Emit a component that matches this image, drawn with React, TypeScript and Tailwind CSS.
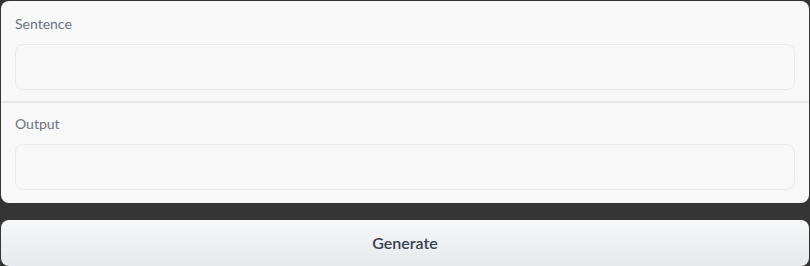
export default function App() {
  return (
    <div
      className="w-[810px] h-[266px] bg-[#353535] px-px pt-px overflow-hidden"
      style={{ fontFamily: '"Lato", "Noto Sans", sans-serif' }}
    >
      {/* Card with the two text fields */}
      <div className="bg-[#f8f8f8] rounded-[8px] overflow-hidden">
        <div className="px-[14px] pt-[13px] pb-[11px]">
          <div className="h-5 leading-5 text-[14px] text-[#6b7280]">Sentence</div>
          <div className="mt-[10px] h-[46px] rounded-[8px] border border-[#e9e9ea] bg-[#f8f8f8]" />
        </div>
        <div className="h-[2px] bg-[#e7e7e9]" />
        <div className="px-[14px] pt-[11px] pb-[13px]">
          <div className="h-5 leading-5 text-[14px] text-[#6b7280]">Output</div>
          <div className="mt-[10px] h-[46px] rounded-[8px] border border-[#e9e9ea] bg-[#f8f8f8]" />
        </div>
      </div>

      {/* Generate button */}
      <button className="mt-[17px] w-full h-[46px] rounded-[8px] bg-gradient-to-b from-[#f6f7f8] to-[#e8e9ec] text-[16px] font-semibold text-[#374151]">
        Generate
      </button>
    </div>
  );
}
